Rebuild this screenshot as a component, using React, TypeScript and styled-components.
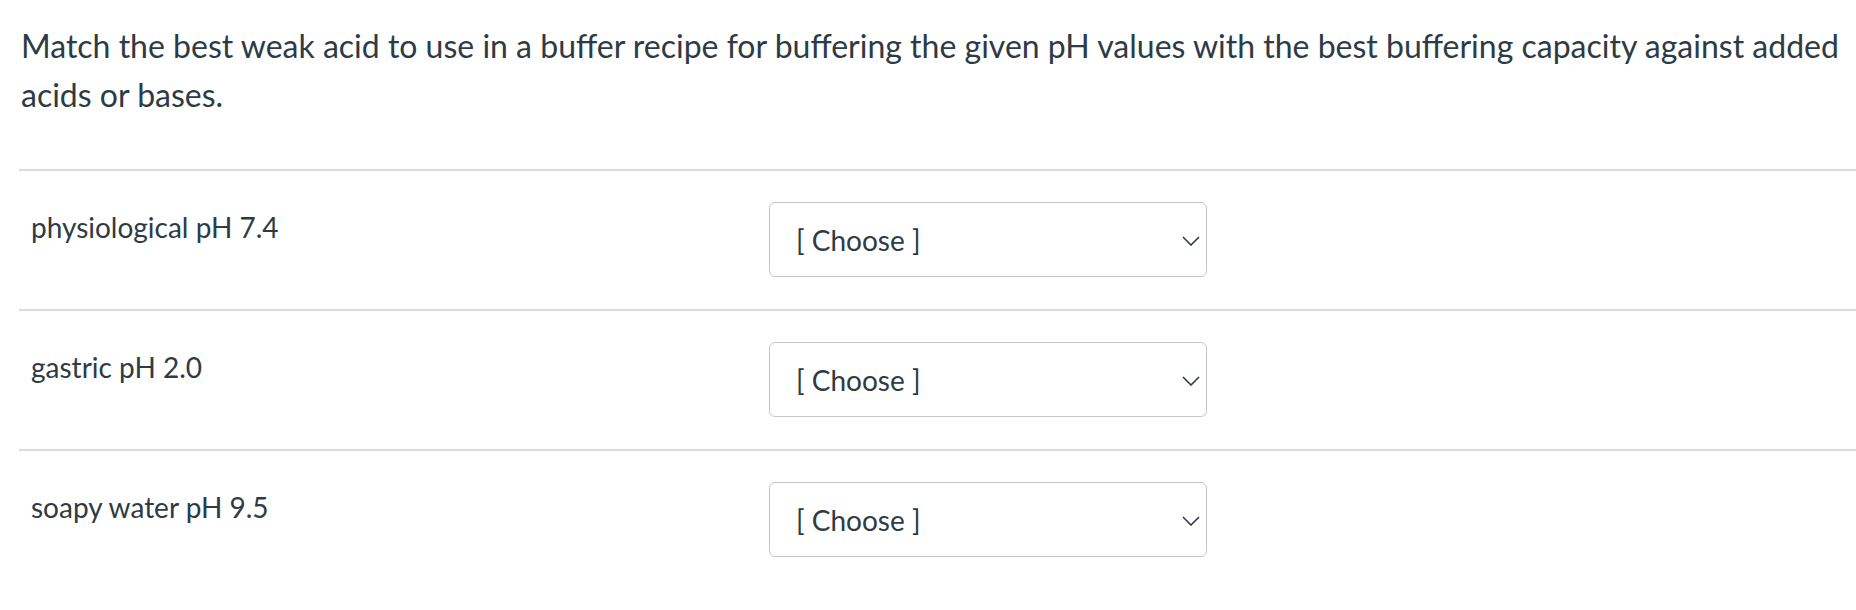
import styled, { createGlobalStyle } from 'styled-components'

const GlobalStyle = createGlobalStyle`
    html, body {
        margin: 0;
        padding: 0;
        background: #ffffff;
    }
    body {
        font-family: Lato, "Noto Sans", "Liberation Sans", sans-serif;
        color: #2d3b45;
    }
`

const Page = styled.div`
    width: 1856px;
    height: 610px;
    box-sizing: border-box;
    padding: 22px 0 0 19px;
    overflow: hidden;
`

const Question = styled.p`
    margin: 0 0 0 2px;
    font-size: 32px;
    line-height: 48.5px;
    color: #2d3b45;
`

const Answers = styled.div`
    margin-top: 50px;
`

const Row = styled.div`
    display: flex;
    align-items: flex-start;
    border-top: 2px solid #dcdcdc;
    height: 140px;
    box-sizing: border-box;
    padding: 31px 0 0 12px;
`

const Label = styled.div`
    width: 738px;
    padding-top: 5px;
    font-size: 28px;
    line-height: 40px;
    color: #2d3b45;
`

const SelectBox = styled.div`
    width: 438px;
    height: 75px;
    box-sizing: border-box;
    border: 1.6px solid #c6c6c6;
    border-radius: 6px;
    display: flex;
    align-items: center;
    justify-content: space-between;
    padding: 0 6px 0 26px;
    font-size: 28px;
    color: #2d3b45;
    background: #fff;
`

const Chevron = styled.svg`
    width: 18px;
    height: 10px;
    margin-top: 2px;
`

const rows = ['physiological pH 7.4', 'gastric pH 2.0', 'soapy water pH 9.5']

const App = () => {
    return (
        <>
            <GlobalStyle />
            <Page>
                <Question>
                    Match the best weak acid to use in a buffer recipe for buffering the given pH values with the best buffering capacity against added acids or bases.
                </Question>
                <Answers>
                    {rows.map((r) => (
                        <Row key={r}>
                            <Label>{r}</Label>
                            <SelectBox>
                                <span>[ Choose ]</span>
                                <Chevron viewBox="0 0 18 10" fill="none" stroke="#2d3b45" strokeWidth="1.6">
                                    <path d="M1 1 L9 9 L17 1" />
                                </Chevron>
                            </SelectBox>
                        </Row>
                    ))}
                </Answers>
            </Page>
        </>
    )
}

export default App
